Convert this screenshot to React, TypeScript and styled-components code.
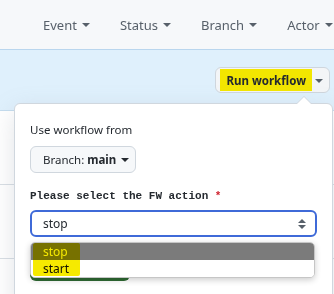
import styled, { createGlobalStyle } from 'styled-components';

const GlobalStyle = createGlobalStyle`
  html, body {
    margin: 0;
    padding: 0;
    background: #ffffff;
    overflow: hidden;
  }
  body {
    font-family: "Noto Sans", "Liberation Sans", sans-serif;
    color: #24292f;
  }
`;

const Page = styled.div`
  position: relative;
  width: 334px;
  height: 294px;
  overflow: hidden;
`;

const FilterBar = styled.div`
  height: 49px;
  display: flex;
  align-items: center;
  padding-left: 43px;
  gap: 30px;
  background: #f6f8fa;
  border-bottom: 1px solid #b9d6ee;
  white-space: nowrap;
`;

const FilterItem = styled.div`
  display: flex;
  align-items: center;
  gap: 5px;
  font-size: 13px;
  color: #57606a;
`;

const Caret = styled.span<{ $color?: string }>`
  display: inline-block;
  width: 0;
  height: 0;
  border-left: 4px solid transparent;
  border-right: 4px solid transparent;
  border-top: 4px solid ${p => p.$color || '#57606a'};
  margin-top: 1px;
`;

const Banner = styled.div`
  height: 60px;
  display: flex;
  align-items: center;
  justify-content: flex-end;
  padding-right: 4px;
  background: #dff0fc;
  border-bottom: 1px solid #c4dcee;
`;

const RunButton = styled.div`
  height: 24px;
  display: flex;
  align-items: center;
  gap: 3px;
  padding: 0 6px 0 4px;
  background: #f3f5f7;
  border: 1px solid #cfd6dd;
  border-radius: 6px;
`;

const Mark = styled.span`
  display: inline-flex;
  align-items: center;
  height: 22px;
  padding: 0 6px;
  background: #f2e600;
  font-size: 11.5px;
  font-weight: 700;
  color: #24292f;
`;

const RunRow = styled.div`
  height: 73px;
  border-bottom: 1px solid #d8dee4;
`;

const Popover = styled.div`
  position: absolute;
  top: 103px;
  left: 14px;
  width: 319px;
  height: 210px;
  padding: 17px 15px 0;
  box-sizing: border-box;
  background: #ffffff;
  border: 1px solid #d0d7de;
  border-radius: 6px;
  box-shadow: 0 8px 24px rgba(140, 149, 159, 0.25);

  &::before,
  &::after {
    content: '';
    position: absolute;
    right: 20px;
    width: 0;
    height: 0;
    border-left: 8px solid transparent;
    border-right: 8px solid transparent;
  }
  &::before {
    top: -8px;
    border-bottom: 8px solid #d0d7de;
  }
  &::after {
    top: -7px;
    border-bottom: 8px solid #ffffff;
  }
`;

const Heading = styled.div`
  font-size: 11.5px;
  line-height: 18px;
  color: #24292f;
`;

const BranchButton = styled.div`
  margin-top: 7px;
  width: 106px;
  height: 27px;
  box-sizing: border-box;
  display: flex;
  align-items: center;
  gap: 5px;
  padding-left: 12px;
  background: #f6f8fa;
  border: 1px solid #d0d7de;
  border-radius: 6px;
  font-size: 11.5px;
  color: #24292f;
  b {
    font-weight: 700;
  }
`;

const FieldLabel = styled.div`
  margin-top: 15px;
  font-family: "Liberation Mono", "DejaVu Sans Mono", monospace;
  font-size: 11px;
  font-weight: 700;
  line-height: 16px;
  color: #24292f;
  span {
    color: #cf222e;
  }
`;

const SelectBox = styled.div`
  position: relative;
  margin-top: 6px;
  height: 27px;
  box-sizing: border-box;
  display: flex;
  align-items: center;
  justify-content: space-between;
  padding: 0 9px 0 11px;
  border: 2px solid #3f6ad8;
  border-radius: 6px;
  font-size: 12px;
  color: #24292f;
`;

const UpDown = styled.span`
  display: flex;
  flex-direction: column;
  gap: 2px;
  i {
    width: 0;
    height: 0;
    border-left: 4px solid transparent;
    border-right: 4px solid transparent;
  }
  i:first-child {
    border-bottom: 4px solid #57606a;
  }
  i:last-child {
    border-top: 4px solid #57606a;
  }
`;

const SubmitButton = styled.div`
  margin-top: 16px;
  width: 100px;
  height: 28px;
  background: #2f6b33;
  border-radius: 6px;
`;

const OptionList = styled.div`
  position: absolute;
  top: 242px;
  left: 30px;
  width: 285px;
  box-sizing: border-box;
  border: 1px solid #c6c6c6;
  border-radius: 5px;
  overflow: hidden;
  background: #ffffff;
  box-shadow: 0 2px 6px rgba(0, 0, 0, 0.2);
`;

const Option = styled.div<{ $selected?: boolean }>`
  height: 17px;
  line-height: 17px;
  padding-left: 12px;
  font-size: 12px;
  background: ${p => (p.$selected ? '#7b7b7b' : '#ffffff')};
  color: ${p => (p.$selected ? '#ffffff' : '#111111')};
`;

const Highlight = styled.div`
  position: absolute;
  top: 0;
  left: 2px;
  width: 47px;
  height: 33px;
  background: #f6ea00;
  mix-blend-mode: multiply;
  border-radius: 2px;
`;

const filters = ['Event', 'Status', 'Branch', 'Actor'];

export default function App() {
  return (
    <Page>
      <GlobalStyle />
      <FilterBar>
        {filters.map(f => (
          <FilterItem key={f}>
            {f}
            <Caret />
          </FilterItem>
        ))}
      </FilterBar>
      <Banner>
        <RunButton>
          <Mark>Run workflow</Mark>
          <Caret />
        </RunButton>
      </Banner>
      <RunRow />
      <RunRow />
      <RunRow />

      <Popover>
        <Heading>Use workflow from</Heading>
        <BranchButton>
          <span>
            Branch: <b>main</b>
          </span>
          <Caret $color="#24292f" />
        </BranchButton>
        <FieldLabel>
          Please select the FW action <span>*</span>
        </FieldLabel>
        <SelectBox>
          stop
          <UpDown>
            <i />
            <i />
          </UpDown>
        </SelectBox>
        <SubmitButton />
      </Popover>

      <OptionList>
        <Option $selected>stop</Option>
        <Option>start</Option>
        <Highlight />
      </OptionList>
    </Page>
  );
}
